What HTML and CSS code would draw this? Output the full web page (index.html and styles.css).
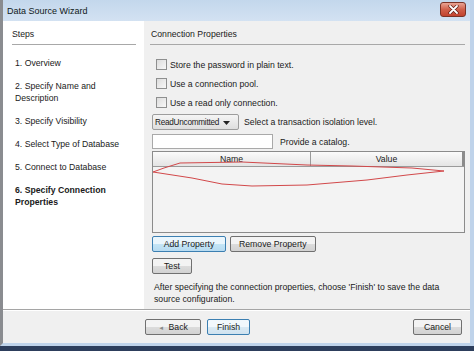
FILE: index.html
```html
<!DOCTYPE html>
<html lang="en">
<head>
    <meta charset="UTF-8">
    <title>Data Source Wizard</title>
    <link rel="stylesheet" href="styles.css">
</head>
<body>
    <div class="window">
        <div class="titlebar">
            <span class="title">Data Source Wizard</span>
            <div class="close">
                <svg width="11" height="9" viewBox="0 0 11 9">
                    <path d="M2 1 L9 8 M9 1 L2 8" stroke="#5a1a12" stroke-width="3.2" stroke-linecap="round"/>
                    <path d="M2 1 L9 8 M9 1 L2 8" stroke="#fff" stroke-width="1.8" stroke-linecap="round"/>
                </svg>
            </div>
        </div>

        <div class="main">
            <div class="steps">
                <div class="steps-head">Steps</div>
                <ul class="step-list">
                    <li>1. Overview</li>
                    <li>2. Specify Name and<br>Description</li>
                    <li>3. Specify Visibility</li>
                    <li>4. Select Type of Database</li>
                    <li>5. Connect to Database</li>
                    <li class="current">6. Specify Connection<br>Properties</li>
                </ul>
            </div>

            <div class="content">
                <div class="content-head">Connection Properties</div>
                <div class="form">
                    <div class="check-row"><span class="box"></span>Store the password in plain text.</div>
                    <div class="check-row"><span class="box"></span>Use a connection pool.</div>
                    <div class="check-row"><span class="box"></span>Use a read only connection.</div>

                    <div class="field-row">
                        <div class="combo"><span>ReadUncommitted</span>
                            <svg width="7" height="4" viewBox="0 0 7 4"><path d="M0 0 H7 L3.5 4 Z" fill="#222"/></svg>
                        </div>
                        <span class="field-label">Select a transaction isolation level.</span>
                    </div>
                    <div class="field-row catalog">
                        <div class="textbox"></div>
                        <span class="field-label">Provide a catalog.</span>
                    </div>

                    <div class="table">
                        <div class="table-head">
                            <div class="col-name">Name</div>
                            <div class="col-value">Value</div>
                        </div>
                        <svg class="scribble" width="300" height="40" viewBox="0 0 300 40">
                            <polygon points="28,12 90,11 155,14 200,15 260,17 292,20 255,24 215,29 155,34 100,35 70,33 40,27 1,21 12,17" fill="none" stroke="#d2484a" stroke-width="1"/>
                        </svg>
                    </div>

                    <div class="button-row">
                        <button class="btn btn-blue">Add Property</button>
                        <button class="btn">Remove Property</button>
                    </div>
                    <div class="button-row test-row">
                        <button class="btn btn-test">Test</button>
                    </div>

                    <p class="note">After specifying the connection properties, choose 'Finish' to save the data source configuration.</p>
                </div>
            </div>
        </div>

        <div class="footer">
            <button class="btn btn-back"><span class="arrow">&#9668;</span> Back</button>
            <button class="btn btn-finish">Finish</button>
            <button class="btn btn-cancel">Cancel</button>
        </div>
    </div>
    <div class="desktop-strip"></div>
</body>
</html>
```

FILE: styles.css
```css
body {
    margin: 0;
    padding: 0;
    width: 474px;
    height: 351px;
    overflow: hidden;
    font-family: 'Liberation Sans', Arial, sans-serif;
    font-size: 8.7px;
    color: #1a1a1a;
    background: #2d3e5c;
}
.window {
    width: 474px;
    height: 346px;
    box-sizing: border-box;
    border-left: 3px solid #8a8c90;
    border-right: 4px solid #bfd3ea;
    border-bottom: 3px solid #bfd3ea;
    background: #f0f0f0;
    display: flex;
    flex-direction: column;
}
.titlebar {
    height: 21px;
    display: flex;
    align-items: center;
    justify-content: space-between;
    background: linear-gradient(#c3d7ec, #d3e2f2);
    padding: 0 4px 0 4px;
    flex-shrink: 0;
}
.title {
    font-size: 9px;
    color: #101820;
}
.close {
    width: 24px;
    height: 13px;
    margin-top: -2px;
    border: 1px solid #7b3326;
    border-radius: 3px;
    background: linear-gradient(#e9a494, #d0604a 50%, #c2432e);
    display: flex;
    align-items: center;
    justify-content: center;
}
.main {
    height: 288px;
    display: flex;
    border-bottom: 1px solid #a5a5a5;
    box-shadow: 0 1px 0 #ffffff;
    flex-shrink: 0;
}
.steps {
    width: 141px;
    background: #fff;
    padding: 0 8px 0 9px;
    box-sizing: border-box;
}
.steps-head {
    padding-top: 7px;
    padding-bottom: 4px;
    line-height: 12px;
    border-bottom: 1px solid #a8a8a8;
}
.step-list {
    list-style: none;
    margin: 0;
    padding: 0 0 0 3px;
}
.step-list li {
    line-height: 12px;
    margin-top: 11px;
}
.step-list li:first-child {
    margin-top: 12px;
}
.step-list .current {
    font-weight: bold;
}
.content {
    flex: 1;
    display: flex;
    flex-direction: column;
}
.content-head {
    margin: 0 5px 0 6px;
    padding: 7px 0 4px 1px;
    line-height: 12px;
    border-bottom: 1px solid #a8a8a8;
}
.form {
    padding: 10px 5px 0 8px;
}
.check-row {
    height: 19px;
    display: flex;
    align-items: center;
}
.box {
    width: 9px;
    height: 9px;
    margin: 0 3px 0 4px;
    border: 1px solid #8e8f8f;
    background: linear-gradient(135deg, #dcdcdc, #f8f8f8);
}
.field-row {
    display: flex;
    align-items: center;
    margin-top: 2px;
}
.field-row.catalog {
    margin-top: 4px;
}
.combo {
    width: 87px;
    height: 16px;
    box-sizing: border-box;
    padding: 0 8px 0 2px;
    border: 1px solid #9d9d9d;
    border-radius: 2px;
    background: linear-gradient(#f5f5f5, #dedede);
    display: flex;
    align-items: center;
    justify-content: space-between;
}
.combo span {
    font-size: 8.2px;
    letter-spacing: -0.25px;
}
.combo svg {
    margin-top: 2px;
}
.textbox {
    width: 121px;
    height: 15px;
    box-sizing: border-box;
    border: 1px solid #a9a9a9;
    background: #fff;
}
.field-label {
    margin-left: 5px;
}
.catalog .field-label {
    margin-left: 7px;
}
.table {
    position: relative;
    width: 313px;
    height: 82px;
    margin-top: 2px;
    box-sizing: border-box;
    border: 1px solid #8b8b8b;
    background: #f3f3f3;
}
.table-head {
    display: flex;
    height: 14px;
    background: linear-gradient(#fbfbfb, #e4e4e4);
    border-bottom: 1px solid #9a9a9a;
}
.col-name, .col-value {
    display: flex;
    align-items: center;
    justify-content: center;
}
.col-name {
    width: 157px;
    border-right: 1px solid #9a9a9a;
}
.col-value {
    flex: 1;
    border-right: 2px solid #8b8b8b;
}
.scribble {
    position: absolute;
    left: -1px;
    top: -1px;
}
.button-row {
    display: flex;
    gap: 4px;
    margin-top: 3px;
}
.test-row {
    margin-top: 6px;
}
.btn {
    height: 16px;
    padding: 0 8px;
    font-family: inherit;
    font-size: 8.7px;
    color: #1a1a1a;
    border: 1px solid #707070;
    border-radius: 2px;
    background: linear-gradient(#f3f3f3 50%, #dcdcdc 50%, #d2d2d2);
}
.btn-blue {
    width: 74px;
    border-color: #3c7fb1;
    background: linear-gradient(#eaf6fd 50%, #c4e5f6 50%, #b7dbf1);
}
.btn-test {
    width: 40px;
}
.note {
    margin: 7px 0 0 2px;
    line-height: 12px;
    width: 300px;
}
.footer {
    flex: 1;
    display: flex;
    align-items: flex-start;
    gap: 6px;
    padding: 9px 8px 0 142px;
}
.btn-back {
    width: 56px;
    color: #222;
}
.btn-back .arrow {
    font-size: 6px;
    color: #8a8a8a;
    margin-right: 2px;
}
.btn-finish {
    width: 43px;
    border-color: #3c7fb1;
    background: linear-gradient(#f2f8fc 50%, #dbeaf4 50%, #cfe2ef);
}
.btn-cancel {
    width: 49px;
    margin-left: auto;
}
.desktop-strip {
    height: 5px;
    background: #2d3e5c;
}
```
